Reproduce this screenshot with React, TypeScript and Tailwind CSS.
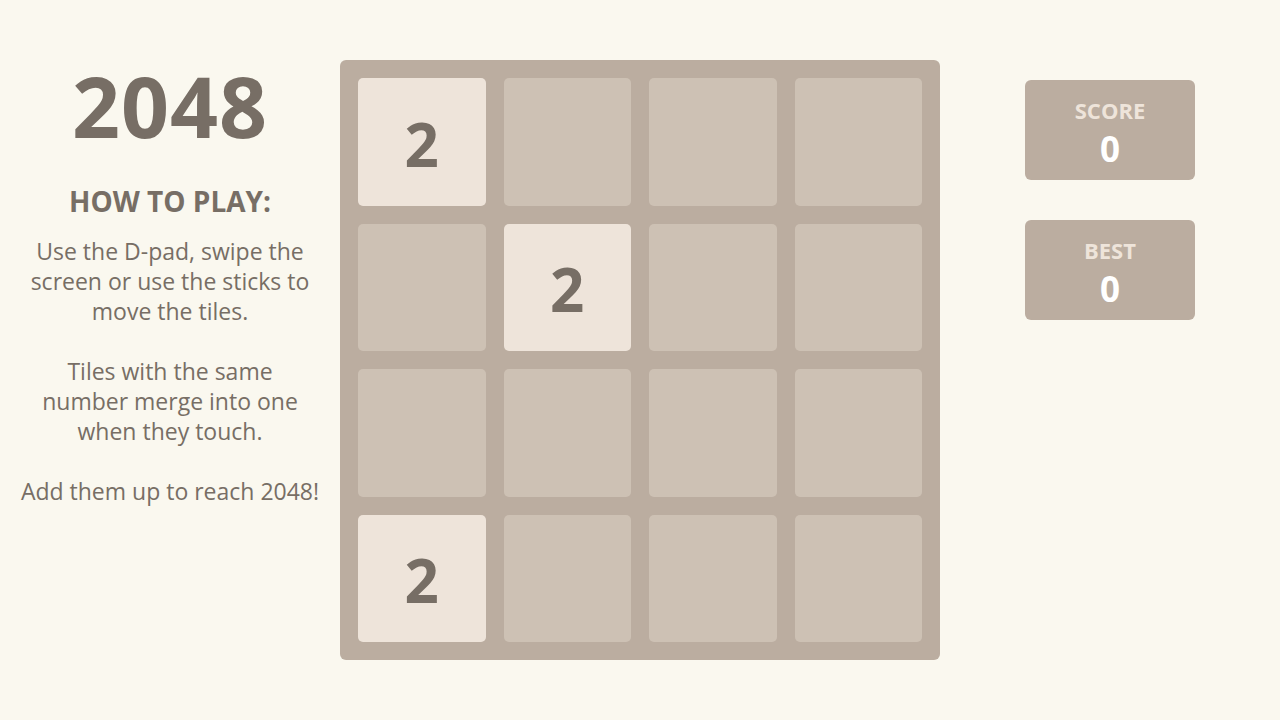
import React from 'react';

const board: number[][] = [
    [2, 0, 0, 0],
    [0, 2, 0, 0],
    [0, 0, 0, 0],
    [2, 0, 0, 0],
];

const ScoreBox: React.FC<{ label: string; value: number }> = ({ label, value }) => (
    <div className="w-[170px] h-[100px] rounded-[6px] bg-[#bbada0] flex flex-col items-center justify-center gap-[8px] pt-[4px]">
        <div className="text-[22px] leading-[26px] font-bold text-[#eee4da]">{label}</div>
        <div className="text-[35px] leading-[36px] font-bold text-white">{value}</div>
    </div>
);

const Tile: React.FC<{ value: number }> = ({ value }) => (
    <div
        className={`rounded-[5px] flex items-center justify-center ${value ? 'bg-[#eee4da]' : 'bg-[#cdc1b4]'}`}
    >
        {value > 0 && <span className="text-[60px] font-bold text-[#776e65] pt-[4px]">{value}</span>}
    </div>
);

export default function App() {
    return (
        <div
            className="w-[1280px] h-[720px] bg-[#faf8ef] flex items-start text-[#776e65]"
            style={{ fontFamily: '"Open Sans", "Noto Sans", sans-serif' }}
        >
            <div className="w-[340px] flex flex-col items-center text-center pt-[58px]">
                <h1 className="text-[84px] leading-[96px] font-bold tracking-[1px]">2048</h1>
                <h2 className="mt-[30px] text-[28px] leading-[34px] font-bold">HOW TO PLAY:</h2>
                <div className="mt-[18px] text-[23px] leading-[30px] flex flex-col gap-[30px]">
                    <p>Use the D-pad, swipe the<br />screen or use the sticks to<br />move the tiles.</p>
                    <p>Tiles with the same<br />number merge into one<br />when they touch.</p>
                    <p>Add them up to reach 2048!</p>
                </div>
            </div>

            <div className="mt-[60px] w-[600px] h-[600px] rounded-[6px] bg-[#bbada0] p-[18px] grid grid-cols-4 grid-rows-4 gap-[18px]">
                {board.flat().map((v, i) => (
                    <Tile key={i} value={v} />
                ))}
            </div>

            <div className="w-[340px] flex flex-col items-center gap-[40px] pt-[80px]">
                <ScoreBox label="SCORE" value={0} />
                <ScoreBox label="BEST" value={0} />
            </div>
        </div>
    );
}
